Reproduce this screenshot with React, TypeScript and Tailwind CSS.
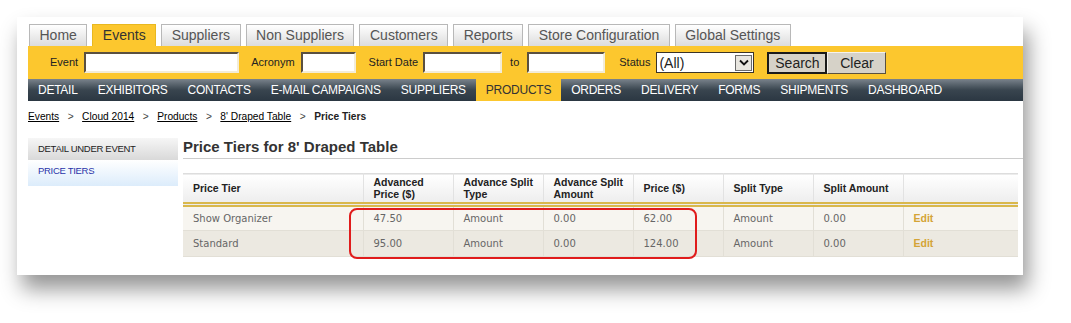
import React from 'react';

const tabs = ['Home', 'Events', 'Suppliers', 'Non Suppliers', 'Customers', 'Reports', 'Store Configuration', 'Global Settings'];
const navItems = ['DETAIL', 'EXHIBITORS', 'CONTACTS', 'E-MAIL CAMPAIGNS', 'SUPPLIERS', 'PRODUCTS', 'ORDERS', 'DELIVERY', 'FORMS', 'SHIPMENTS', 'DASHBOARD'];

const columns = [
  { label: ['Price Tier'], w: 180 },
  { label: ['Advanced', 'Price ($)'], w: 90 },
  { label: ['Advance Split', 'Type'], w: 90 },
  { label: ['Advance Split', 'Amount'], w: 90 },
  { label: ['Price ($)'], w: 90 },
  { label: ['Split Type'], w: 90 },
  { label: ['Split Amount'], w: 90 },
  { label: [''], w: 115 },
];

const rows = [
  ['Show Organizer', '47.50', 'Amount', '0.00', '62.00', 'Amount', '0.00'],
  ['Standard', '95.00', 'Amount', '0.00', '124.00', 'Amount', '0.00'],
];

const inset =
  'h-[21px] bg-white border-2 border-t-[#5a5040] border-l-[#5a5040] border-b-[#f3ecd8] border-r-[#f3ecd8]';

function SearchBar() {
  return (
    <div className="h-[33px] bg-[#fcc72e] flex items-center pl-[22px] text-[11px] text-[#222]">
      <span>Event</span>
      <div className={`${inset} w-[155px] ml-[6px]`} />
      <span className="ml-[12px]">Acronym</span>
      <div className={`${inset} w-[55px] ml-[6px]`} />
      <span className="ml-[13px]">Start Date</span>
      <div className={`${inset} w-[79px] ml-[5px]`} />
      <span className="ml-[8px]">to</span>
      <div className={`${inset} w-[78px] ml-[8px]`} />
      <span className="ml-[14px]">Status</span>
      <div className="ml-[6px] w-[98px] h-[21px] bg-white border border-[#3a3328] flex items-center justify-between pl-[2px] pr-[1px]">
        <span className="text-[14px] leading-none">(All)</span>
        <span className="w-[17px] h-[16px] bg-[#e8e6e0] border border-[#6b6b6b] flex items-center justify-center">
          <svg width="10" height="7" viewBox="0 0 10 7">
            <path d="M1 1.5 L5 5.5 L9 1.5" fill="none" stroke="#111" strokeWidth="1.8" />
          </svg>
        </span>
      </div>
      <button className="ml-[13px] w-[60px] h-[22px] bg-[#d6d2c8] border-2 border-[#1a1a1a] text-[14px] leading-none">
        Search
      </button>
      <button className="w-[59px] h-[22px] bg-[#d6d2c8] border border-t-[#f4f2ee] border-l-[#f4f2ee] border-b-[#5a5140] border-r-[#5a5140] text-[14px] leading-none">
        Clear
      </button>
    </div>
  );
}

export default function App() {
  return (
    <div className="w-[1071px] h-[323px] bg-white pl-[17px] pt-[17px]" style={{ fontFamily: '"Liberation Sans", Arial, sans-serif' }}>
      <div className="w-[1006px] h-[258px] bg-white shadow-[5px_14px_20px_rgba(0,0,0,0.42)] pl-[11px] pt-[7px]">
        {/* top tabs */}
        <div className="flex items-end gap-[5px] pl-[1px] h-[22px]">
          {tabs.map((t) => (
            <div
              key={t}
              className={
                t === 'Events'
                  ? 'h-[22px] px-[9.5px] bg-[#fcc72e] border border-b-0 border-[#e8b820] text-[14px] text-[#333] leading-[21px]'
                  : 'h-[22px] px-[9.5px] bg-linear-to-b from-[#ffffff] to-[#dcdcdc] border border-b-0 border-[#b8b8b8] text-[14px] text-[#555] leading-[21px]'
              }
            >
              {t}
            </div>
          ))}
        </div>

        <SearchBar />

        {/* section nav */}
        <div className="h-[22px] flex bg-linear-to-b from-[#7a838c] via-[#39454f] to-[#2b3742]">
          {navItems.map((n) => (
            <div
              key={n}
              className={
                n === 'PRODUCTS'
                  ? 'px-[10px] bg-[#fcc72e] text-[#333] text-[12px] tracking-[-0.25px] leading-[22px]'
                  : 'px-[10px] text-white text-[12px] tracking-[-0.25px] leading-[22px]'
              }
            >
              {n}
            </div>
          ))}
        </div>

        {/* breadcrumb */}
        <div className="mt-[10px] h-[12px] flex items-center text-[10.2px] text-black leading-none">
          <span className="underline">Events</span>
          <span className="mx-[8.5px] text-[#444]">&gt;</span>
          <span className="underline">Cloud 2014</span>
          <span className="mx-[8.5px] text-[#444]">&gt;</span>
          <span className="underline">Products</span>
          <span className="mx-[8.5px] text-[#444]">&gt;</span>
          <span className="underline">8' Draped Table</span>
          <span className="mx-[8.5px] text-[#444]">&gt;</span>
          <span className="text-[#222] font-semibold">Price Tiers</span>
        </div>

        <div className="mt-[15px] flex gap-[5px]">
          {/* sidebar */}
          <div className="w-[150px] shrink-0">
            <div className="h-[22px] bg-linear-to-b from-[#f6f6f6] to-[#d9d9d9] pl-[10px] text-[9.5px] tracking-[-0.3px] text-[#222] leading-[22px]">
              DETAIL UNDER EVENT
            </div>
            <div className="h-[26px] bg-linear-to-b from-[#ffffff] to-[#dcecfb] pl-[10px] text-[9.5px] tracking-[-0.3px] text-[#2a33a8] leading-[22px]">
              PRICE TIERS
            </div>
          </div>

          {/* main */}
          <div className="flex-1">
            <div className="border-b border-[#cccccc] pb-[2px]">
              <h1 className="text-[15px] font-bold text-[#333] leading-[18px]">Price Tiers for 8' Draped Table</h1>
            </div>

            <div className="relative mt-[14px] w-[835px]">
              <table className="table-fixed border-collapse w-[835px]">
                <colgroup>
                  {columns.map((c, i) => (
                    <col key={i} style={{ width: c.w }} />
                  ))}
                </colgroup>
                <thead>
                  <tr className="bg-linear-to-b from-[#ffffff] to-[#ececec] border-t border-[#dddddd]">
                    {columns.map((c, i) => (
                      <th
                        key={i}
                        className="h-[31px] pl-[10px] text-left align-middle text-[10.5px] font-bold text-[#222] leading-[12px] border-l border-[#e2e2e2] first:border-l-0 border-b-[5px] border-b-[#d9b84c]"
                        style={{ borderBottomStyle: 'double' }}
                      >
                        {c.label.map((l, j) => (
                          <div key={j}>{l}</div>
                        ))}
                      </th>
                    ))}
                  </tr>
                </thead>
                <tbody style={{ fontFamily: '"DejaVu Sans", Verdana, sans-serif' }}>
                  {rows.map((r, ri) => (
                    <tr key={ri} className={ri === 0 ? 'bg-[#f7f5f0]' : 'bg-[#ece9e1]'}>
                      {r.map((v, ci) => (
                        <td
                          key={ci}
                          className="h-[26px] pl-[10px] text-[10px] text-[#666] border-l border-b border-[#e2dfd6] first:border-l-0"
                        >
                          {v}
                        </td>
                      ))}
                      <td
                        className="h-[26px] pl-[10px] text-[10.5px] font-bold text-[#d4a437] border-l border-b border-[#e2dfd6]"
                        style={{ fontFamily: '"Liberation Sans", Arial, sans-serif' }}
                      >
                        Edit
                      </td>
                    </tr>
                  ))}
                </tbody>
              </table>
              {/* red annotation */}
              <div className="absolute left-[166px] top-[35px] w-[348px] h-[51px] border-2 border-[#e01c1c] rounded-[8px] pointer-events-none" />
            </div>
          </div>
        </div>
      </div>
    </div>
  );
}
